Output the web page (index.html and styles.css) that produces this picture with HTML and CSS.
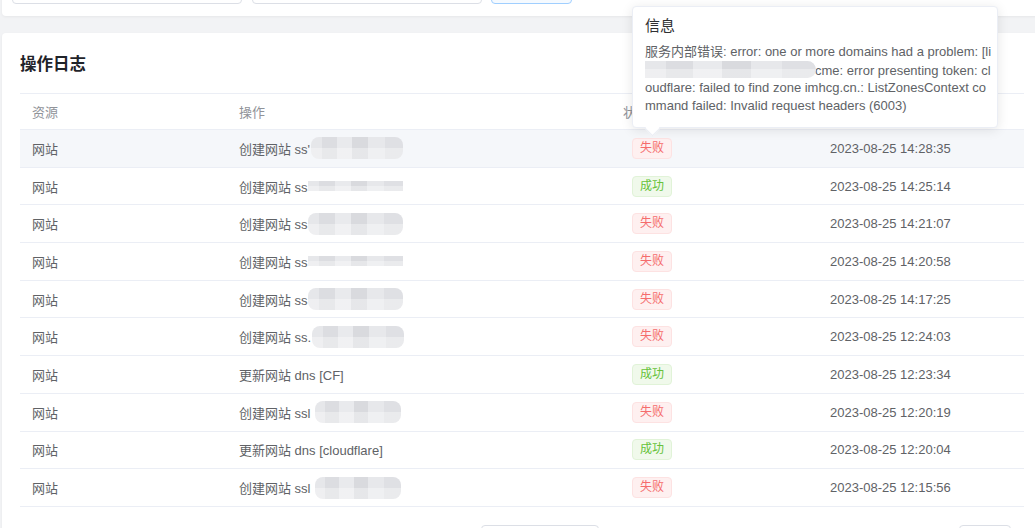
FILE: index.html
```html
<!DOCTYPE html>
<html lang="zh-CN">
<head>
    <meta charset="UTF-8">
    <meta name="viewport" content="width=device-width, initial-scale=1.0">
    <title>操作日志</title>
    <link rel="stylesheet" href="styles.css">
</head>
<body>
    <div class="card filter-card">
        <div class="filter-input"></div>
        <div class="filter-input"></div>
        <div class="filter-btn"></div>
    </div>

    <div class="card log-card">
        <h2 class="card-title">操作日志</h2>

        <div class="log-table">
            <div class="log-row head">
                <div class="cell">资源</div>
                <div class="cell">操作</div>
                <div class="cell status-head">状态</div>
                <div class="cell">时间</div>
            </div>

            <div class="log-row hover">
                <div class="cell">网站</div>
                <div class="cell">创建网站 ss'<span class="blur w1"></span></div>
                <div class="cell"><span class="tag fail">失败</span></div>
                <div class="cell">2023-08-25 14:28:35</div>
            </div>
            <div class="log-row">
                <div class="cell">网站</div>
                <div class="cell">创建网站 ss<span class="blur w2 flat"></span></div>
                <div class="cell"><span class="tag ok">成功</span></div>
                <div class="cell">2023-08-25 14:25:14</div>
            </div>
            <div class="log-row">
                <div class="cell">网站</div>
                <div class="cell">创建网站 ss<span class="blur w2"></span></div>
                <div class="cell"><span class="tag fail">失败</span></div>
                <div class="cell">2023-08-25 14:21:07</div>
            </div>
            <div class="log-row">
                <div class="cell">网站</div>
                <div class="cell">创建网站 ss<span class="blur w2 flat"></span></div>
                <div class="cell"><span class="tag fail">失败</span></div>
                <div class="cell">2023-08-25 14:20:58</div>
            </div>
            <div class="log-row">
                <div class="cell">网站</div>
                <div class="cell">创建网站 ss<span class="blur w2"></span></div>
                <div class="cell"><span class="tag fail">失败</span></div>
                <div class="cell">2023-08-25 14:17:25</div>
            </div>
            <div class="log-row">
                <div class="cell">网站</div>
                <div class="cell">创建网站 ss.<span class="blur w1"></span></div>
                <div class="cell"><span class="tag fail">失败</span></div>
                <div class="cell">2023-08-25 12:24:03</div>
            </div>
            <div class="log-row">
                <div class="cell">网站</div>
                <div class="cell">更新网站 dns [CF]</div>
                <div class="cell"><span class="tag ok">成功</span></div>
                <div class="cell">2023-08-25 12:23:34</div>
            </div>
            <div class="log-row">
                <div class="cell">网站</div>
                <div class="cell">创建网站 ssl<span class="blur w3"></span></div>
                <div class="cell"><span class="tag fail">失败</span></div>
                <div class="cell">2023-08-25 12:20:19</div>
            </div>
            <div class="log-row">
                <div class="cell">网站</div>
                <div class="cell">更新网站 dns [cloudflare]</div>
                <div class="cell"><span class="tag ok">成功</span></div>
                <div class="cell">2023-08-25 12:20:04</div>
            </div>
            <div class="log-row">
                <div class="cell">网站</div>
                <div class="cell">创建网站 ssl<span class="blur w3"></span></div>
                <div class="cell"><span class="tag fail">失败</span></div>
                <div class="cell">2023-08-25 12:15:56</div>
            </div>
        </div>

        <div class="pager">
            <div class="pager-box sizes"></div>
            <div class="pager-box jump"></div>
        </div>
    </div>

    <!-- popover for the hovered row's status -->
    <div class="popover">
        <div class="popover-title">信息</div>
        <div class="popover-body">
            <div>服务内部错误: error: one or more domains had a problem: [li</div>
            <div><span class="blur msg"></span>cme: error presenting token: cl</div>
            <div>oudflare: failed to find zone imhcg.cn.: ListZonesContext co</div>
            <div>mmand failed: Invalid request headers (6003)</div>
        </div>
        <div class="popover-arrow"></div>
    </div>
</body>
</html>
```

FILE: styles.css
```css
body {
    font-family: "Liberation Sans", "Noto Sans CJK SC", sans-serif;
    background-color: #f2f3f5;
    margin: 0;
    padding: 0 0 0 2px;
    width: 1040px;
    color: #606266;
    font-size: 13px;
}

html, body {
    overflow: hidden;
}

.card {
    background-color: #ffffff;
    border-radius: 4px;
    box-shadow: 0 1px 3px rgba(0, 0, 0, 0.05);
}

/* filter bar, mostly scrolled out of view */
.filter-card {
    margin-top: -40px;
    height: 56px;
    box-sizing: border-box;
    padding: 12px 10px;
    display: flex;
    gap: 10px;
}

.filter-input {
    width: 230px;
    height: 32px;
    box-sizing: border-box;
    border: 1px solid #dcdfe6;
    border-radius: 4px;
}

.filter-btn {
    width: 81px;
    height: 32px;
    box-sizing: border-box;
    margin-left: -1px;
    border: 1px solid #a0cfff;
    background-color: #f5faff;
    border-radius: 4px;
}

.log-card {
    margin-top: 17px;
    padding: 19px 18px 20px;
}

.card-title {
    margin: 0 0 17px;
    font-size: 16.5px;
    line-height: 24px;
    font-weight: bold;
    color: #1f2329;
}

.log-table {
    border-top: 1px solid #ebeef5;
}

.log-row {
    display: grid;
    grid-template-columns: 207px 393px 198px 1fr;
    height: 37.7px;
    box-sizing: border-box;
    border-bottom: 1px solid #ebeef5;
    align-items: center;
}

.log-row.head {
    height: 36px;
    color: #909399;
}

.log-row.hover {
    background-color: #f5f7fa;
}

.cell {
    padding: 0 12px;
    display: flex;
    align-items: center;
    white-space: nowrap;
}

.status-head {
    padding-left: 3px;
}

.tag {
    display: inline-block;
    height: 21px;
    line-height: 19px;
    padding: 0 7px;
    font-size: 12px;
    border: 1px solid;
    border-radius: 4px;
    box-sizing: border-box;
}

.tag.fail {
    color: #f56c6c;
    background-color: #fef0f0;
    border-color: #fde2e2;
}

.tag.ok {
    color: #67c23a;
    background-color: #f0f9eb;
    border-color: #e1f3d8;
}

/* redacted parts of the text */
.blur {
    display: inline-block;
    height: 22px;
    border-radius: 8px;
    background:
        linear-gradient(180deg, rgba(255, 255, 255, 0) 50%, rgba(255, 255, 255, 0.35) 50%),
        linear-gradient(90deg, #e6e7ea 0 12%, #dcdde1 12% 28%, #e9eaed 28% 45%, #d9dade 45% 62%, #e7e8eb 62% 80%, #dfe0e4 80%);
    filter: blur(0.6px);
}

.blur.flat {
    height: 10px;
    border-radius: 0;
}

.blur.w1 { width: 92px; margin-left: 1px; }
.blur.w2 { width: 95px; }
.blur.w3 { width: 86px; margin-left: 4px; }

.blur.msg {
    width: 171px;
    height: 17px;
    margin-right: -1px;
    vertical-align: -3px;
    border-radius: 0 9px 9px 0;
}

.pager {
    margin-top: 18px;
    display: flex;
    padding: 0 13px 0 461px;
    justify-content: space-between;
}

.pager-box {
    height: 28px;
    box-sizing: border-box;
    border: 1px solid #dcdfe6;
    border-radius: 4px;
}

.pager-box.sizes { width: 118px; }
.pager-box.jump { width: 52px; }

.popover {
    position: absolute;
    left: 632px;
    top: 6px;
    width: 366px;
    box-sizing: border-box;
    padding: 11px 12px 12px;
    background-color: #ffffff;
    border: 1px solid #ebeef5;
    border-radius: 4px;
    box-shadow: 0 2px 12px rgba(0, 0, 0, 0.1);
    color: #606266;
}

.popover-title {
    font-size: 15px;
    line-height: 16px;
    color: #303133;
    margin-bottom: 9px;
}

.popover-body {
    font-size: 13px;
    line-height: 17.7px;
    white-space: nowrap;
}

.popover-arrow {
    position: absolute;
    left: 14px;
    bottom: -7px;
    width: 10px;
    height: 10px;
    background-color: #ffffff;
    border-right: 1px solid #ebeef5;
    border-bottom: 1px solid #ebeef5;
    transform: rotate(45deg);
}
```
